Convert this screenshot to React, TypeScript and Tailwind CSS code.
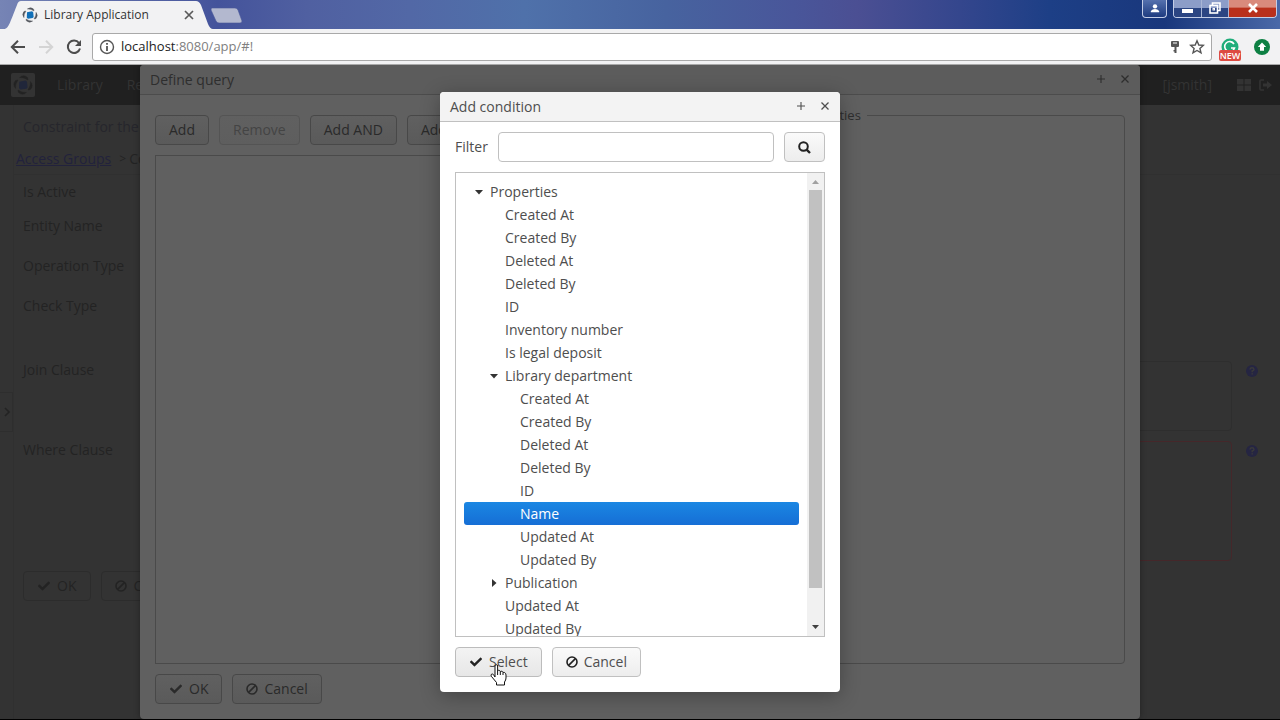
import type { ReactNode } from "react";
import { FaCheck } from "react-icons/fa";

const RING = [0, 90, 180, 270];

function CubaLogo({ className, ring, core }: { className: string; ring: string; core: string }) {
  return (
    <svg viewBox="0 0 24 24" className={className} aria-hidden="true">
      {RING.map((angle) => (
        <path
          key={angle}
          d="M8 3 Q13 -1 17.5 3.2 L18 6 Q13 2.4 8 3 Z"
          fill={ring}
          stroke={ring}
          strokeWidth="0.6"
          transform={`rotate(${angle} 12 12)`}
        />
      ))}
      <path d="M7.5 8 L15 6.5 L16.8 8 L17.5 15 L16 16.5 L9 17.5 L7.2 16 Z" fill={core} />
    </svg>
  );
}

function BanIcon({ className }: { className: string }) {
  return (
    <svg viewBox="0 0 12 12" className={className} fill="none" stroke="currentColor" strokeWidth="1.6" aria-hidden="true">
      <circle cx="6" cy="6" r="5" />
      <path d="M2.6 9.4 L9.4 2.6" />
    </svg>
  );
}

function SearchIcon() {
  return (
    <svg viewBox="0 0 13 13" className="h-[13px] w-[13px]" fill="none" stroke="currentColor" strokeWidth="2" aria-hidden="true">
      <circle cx="5.5" cy="5.5" r="4.3" />
      <path d="M8.6 8.6 L12 12" strokeWidth="2.4" />
    </svg>
  );
}

function TitleBar() {
  return (
    <header className="flex h-[29px] items-start justify-between bg-[linear-gradient(90deg,#7684b5_0%,#44539b_17%,#5060a1_24%,#5268a6_32%,#4f71aa_41%,#47639f_52%,#49569a_62%,#4b4f93_67%,#34468d_75%,#1d3f86_82%,#19377c_91%,#4a69a8_100%)]">
      <div className="relative flex h-[29px] w-[244px] items-center">
        <svg viewBox="0 0 244 29" className="absolute left-0 top-0 h-[29px] w-[244px]" aria-hidden="true">
          <path d="M5 29 C9 27 9 25 17 5 Q18 1 21 1 H196 Q199 1 201 5 L208 24 Q210 29 213 29 Z" fill="#f2f2f3" />
          <path d="M212 8 H235 Q237 8 238 10 L242 21 Q242 23 240 23 H219 Q217 23 216 21 L211 10 Q211 8 212 8 Z" fill="#b3b8cf" stroke="#4a5898" strokeWidth="0.6" />
        </svg>
        <div className="relative flex w-full items-center pl-[22px] pr-[47px]">
          <CubaLogo className="h-4 w-4" ring="#55595f" core="#1170b8" />
          <span className="ml-1.5 flex-1 whitespace-nowrap text-xs text-[#333]">Library Application</span>
          <button aria-label="Close tab" className="flex h-4 w-4 items-center justify-center">
            <svg viewBox="0 0 10 10" className="h-2.5 w-2.5" stroke="#5a5a5a" strokeWidth="1.7">
              <path d="M1 1 L9 9 M9 1 L1 9" />
            </svg>
          </button>
        </div>
      </div>

      <div className="flex pr-[3px]">
        <button aria-label="Profile" className="mr-1.5 flex h-[18px] w-[25px] items-center justify-center rounded-b border border-t-0 border-[#c3cde6] bg-linear-to-b from-[#5571ae] to-[#1e3b80]">
          <svg viewBox="0 0 12 12" className="mb-0.5 h-2.5 w-2.5" fill="#fff">
            <circle cx="6" cy="4" r="2.6" />
            <path d="M1 11 V9.5 Q3 7.2 6 7.2 T11 9.5 V11 Z" />
          </svg>
        </button>
        <div className="flex h-[18px] overflow-hidden rounded-b border border-t-0 border-[#c3cde6]">
          <button aria-label="Minimize" className="flex w-[28px] items-center justify-center border-r border-[#a9b6d6] bg-linear-to-b from-[#8c9dc8] from-45% to-[#2b4583] to-50%">
            <span className="mt-1 h-1 w-[11px] bg-white" />
          </button>
          <button aria-label="Restore" className="flex w-[27px] items-center justify-center border-r border-[#a9b6d6] bg-linear-to-b from-[#8c9dc8] from-45% to-[#2b4583] to-50%">
            <svg viewBox="0 0 12 12" className="mb-0.5 h-3 w-3" fill="none" stroke="#fff" strokeWidth="1.6">
              <path d="M3.5 3 V1 H11 V8.5 H9" />
              <rect x="1" y="3.5" width="7.5" height="7.5" />
              <rect x="4" y="6.5" width="1.5" height="1.5" strokeWidth="1" />
            </svg>
          </button>
          <button aria-label="Close" className="flex w-[47px] items-center justify-center bg-linear-to-b from-[#d98a7c] from-40% to-[#b9301c] to-50%">
            <svg viewBox="0 0 12 10" className="mb-0.5 h-2.5 w-3" stroke="#fff" strokeWidth="2.6">
              <path d="M2 1 L10 9 M10 1 L2 9" />
            </svg>
          </button>
        </div>
      </div>
    </header>
  );
}

function Toolbar() {
  return (
    <div className="flex h-9 items-center border-b border-[#a9a9a9] bg-[#f2f2f3] pl-2.5 pr-[9px]">
      <div className="flex items-center gap-3">
        <button aria-label="Back">
          <svg viewBox="0 0 16 16" className="h-4 w-4" fill="none" stroke="#4c4c4c" strokeWidth="2">
            <path d="M15 8 H2.5 M8 1.8 L1.8 8 L8 14.2" />
          </svg>
        </button>
        <button aria-label="Forward" disabled>
          <svg viewBox="0 0 16 16" className="h-4 w-4" fill="none" stroke="#d4d4d4" strokeWidth="2">
            <path d="M1 8 H13.5 M8 1.8 L14.2 8 L8 14.2" />
          </svg>
        </button>
        <button aria-label="Reload">
          <svg viewBox="0 0 16 16" className="h-4 w-4" fill="none" stroke="#4c4c4c" strokeWidth="2">
            <path d="M13 4 A6.2 6.2 0 1 0 14 9.5" />
            <path d="M15 1 V7 H9 Z" fill="#4c4c4c" stroke="none" />
          </svg>
        </button>
      </div>
      <div className="ml-2.5 flex h-7 flex-1 items-center rounded-[3px] border border-[#a9a9a9] bg-white px-1.5">
        <svg viewBox="0 0 16 16" className="h-4 w-4" fill="none" stroke="#555" strokeWidth="1.4">
          <circle cx="8" cy="8" r="6.5" />
          <path d="M8 7 V12 M8 4 V5.7" strokeWidth="1.8" />
        </svg>
        <div className="ml-1.5 flex-1 text-[13px] text-[#808080]">
          <span className="text-[#222]">localhost</span>:8080/app/#!
        </div>
        <svg viewBox="0 0 12 14" className="mr-2 h-3.5 w-3" fill="#555" aria-hidden="true">
          <path d="M3 1 H9 Q10 1 10 2 V6 Q10 7 9 7 H7.5 V13 H5.5 V11.5 H4.5 V10 H5.5 V7 H3 Q2 7 2 6 V2 Q2 1 3 1 Z M4 2.4 V3.6 H8 V2.4 Z" fillRule="evenodd" />
        </svg>
        <svg viewBox="0 0 16 16" className="h-4 w-4" fill="none" stroke="#555" strokeWidth="1.4" aria-hidden="true">
          <path d="M8 1.8 L9.8 6 L14.3 6.4 L10.9 9.4 L12 13.9 L8 11.5 L4 13.9 L5.1 9.4 L1.7 6.4 L6.2 6 Z" />
        </svg>
      </div>
      <button aria-label="Grammar extension" className="relative ml-[7px] flex h-7 w-[22px] flex-col items-center pt-[5px]">
        <svg viewBox="0 0 18 18" className="h-[18px] w-[18px]">
          <circle cx="9" cy="9" r="8.5" fill="#1fad7a" />
          <path d="M13 6 A5 5 0 1 0 13.5 10 H10" fill="none" stroke="#fff" strokeWidth="1.6" />
        </svg>
        <span className="absolute bottom-0 rounded-xs bg-[#dd4b41] px-px text-[9px] font-semibold leading-[11px] text-white">NEW</span>
      </button>
      <button aria-label="Update available" className="ml-3">
        <svg viewBox="0 0 18 18" className="h-[18px] w-[18px]">
          <circle cx="9" cy="9" r="8" fill="#0e8043" />
          <path d="M9 4.5 L13.2 9 H11 V12.8 H7 V9 H4.8 Z" fill="#fff" />
        </svg>
      </button>
    </div>
  );
}

function HelpIcon() {
  return (
    <svg viewBox="0 0 12 12" className="mt-[5px] h-3 w-3" aria-label="Help">
      <circle cx="6" cy="6" r="6" fill="#252542" />
      <path d="M4 4.5 Q4.2 2.8 6 2.8 T8 4.5 Q8 5.4 6.2 6 V7.2 M6.2 8.2 V9.6" fill="none" stroke="#3a3a3a" strokeWidth="1.5" />
    </svg>
  );
}

const SHORT_ROWS = [
  { label: "Is Active", height: "h-[34px]" },
  { label: "Entity Name", height: "h-10" },
  { label: "Operation Type", height: "h-10" },
  { label: "Check Type", height: "h-16" },
];

/* Constraint editor, dimmed behind the dialogs */
function ConstraintScreen() {
  return (
    <div className="flex min-h-[654px] flex-1 flex-col bg-[#333] text-sm text-[#232323]">
      <nav className="flex h-10 items-center bg-[#202020] pl-[11px] pr-[7px] text-[#333]">
        <div className="flex h-6 w-6 items-center justify-center rounded-xs bg-[#333]">
          <CubaLogo className="h-5 w-5" ring="#232323" core="#20263a" />
        </div>
        <a href="#library" className="ml-[22px]">Library</a>
        <a href="#reports" className="ml-6 flex-1">Re</a>
        <span className="mr-[25px]">[jsmith]</span>
        <svg viewBox="0 0 14 12" className="h-3 w-3.5" fill="#333" aria-hidden="true">
          <path d="M0 0 H6.5 V5.5 H0 Z M7.5 0 H14 V5.5 H7.5 Z M0 6.5 H6.5 V12 H0 Z M7.5 6.5 H14 V12 H7.5 Z" />
        </svg>
        <svg viewBox="0 0 14 12" className="ml-2 h-3 w-3.5" fill="none" stroke="#333" strokeWidth="1.6" aria-hidden="true">
          <path d="M5 1 H2 Q1 1 1 2 V10 Q1 11 2 11 H5" />
          <path d="M4 4.5 H8 V2 L13 6 L8 10 V7.5 H4 Z" fill="#333" stroke="none" />
        </svg>
      </nav>

      <div className="flex flex-1">
        <div className="flex w-3.5 flex-col border-r border-[#303030] pt-[287px]">
          <button aria-label="Expand side panel" className="flex h-10 items-center justify-center border border-l-0 border-[#2e2e2e] pl-0.5">
            <svg viewBox="0 0 8 10" className="h-2.5 w-2" fill="none" stroke="#232323" strokeWidth="1.6">
              <path d="M2 1 L6 5 L2 9" />
            </svg>
          </button>
        </div>
        <div className="flex flex-1 flex-col">
          <div className="flex h-9 items-end pb-1 pl-[9px] text-[#26262c]">Constraint for the</div>
          <div className="flex h-[34px] items-center border-b border-[#303030] pl-0.5 pt-0.5">
            <a href="#groups" className="text-[#22223c] underline">Access Groups</a>
            <span className="ml-2 text-xs">&gt;</span>
            <span className="ml-[3px]">Co</span>
          </div>
          <div className="flex flex-col pl-[9px] pt-[7px]">
            {SHORT_ROWS.map((row) => (
              <div key={row.label} className={row.height}>{row.label}</div>
            ))}
            <div className="flex h-20">
              <label htmlFor="join" className="w-40">Join Clause</label>
              <textarea id="join" className="mt-px h-[70px] flex-1 resize-none rounded border border-[#2e2e2e]" />
              <div className="ml-3.5 w-[34px]"><HelpIcon /></div>
            </div>
            <div className="flex h-[131px]">
              <label htmlFor="where" className="w-40">Where Clause</label>
              <textarea id="where" className="mt-px h-[120px] flex-1 resize-none rounded border border-[#45272a]" />
              <div className="ml-3.5 w-[34px]"><HelpIcon /></div>
            </div>
            <div className="flex gap-2.5">
              <button className="flex h-[30px] items-center gap-[7px] rounded border border-[#2c2c2c] px-3.5">
                <FaCheck className="h-3 w-3" />OK
              </button>
              <button className="flex h-[30px] items-center gap-1.5 rounded border border-[#2c2c2c] px-[13px]">
                <BanIcon className="h-3 w-3" />Cancel
              </button>
            </div>
          </div>
        </div>
      </div>
    </div>
  );
}

function WindowTools() {
  return (
    <div className="flex items-center gap-4 pb-0.5">
      <button aria-label="Maximize">
        <svg viewBox="0 0 8 8" className="h-2 w-2" stroke="currentColor" strokeWidth="1.1">
          <path d="M4 0 V8 M0 4 H8" />
        </svg>
      </button>
      <button aria-label="Close dialog">
        <svg viewBox="0 0 8 8" className="h-2 w-2" stroke="currentColor" strokeWidth="1.3">
          <path d="M0.5 0.5 L7.5 7.5 M7.5 0.5 L0.5 7.5" />
        </svg>
      </button>
    </div>
  );
}

function DimButton({ children, disabled }: { children: ReactNode; disabled?: boolean }) {
  return (
    <button
      disabled={disabled}
      className="flex h-[30px] items-center gap-1.5 whitespace-nowrap rounded border border-[#484848] bg-linear-to-b from-[#606060] to-[#5a5a5a] px-[13px] text-[#2a2a2a] disabled:border-[#545454] disabled:from-[#606060] disabled:to-[#5e5e5e] disabled:text-[#444]"
    >
      {children}
    </button>
  );
}

function DefineQueryDialog() {
  return (
    <section aria-label="Define query" className="flex h-full w-[1000px] flex-col rounded bg-[#606060] text-sm text-[#2e2e2e] shadow-[0_0_6px_rgba(0,0,0,0.35)]">
      <div className="flex h-[30px] items-center justify-between rounded-t border-b border-[#4c4c4c] bg-[#5c5c5c] pl-2.5 pr-[11px]">
        <h2>Define query</h2>
        <WindowTools />
      </div>
      <div className="flex flex-1 flex-col gap-2.5 px-[15px] pb-[15px] pt-2.5">
        <div className="flex flex-1 gap-2.5">
          <div className="flex flex-1 flex-col gap-2.5 pt-2.5">
            <div className="flex gap-2.5">
              <DimButton>Add</DimButton>
              <DimButton disabled>Remove</DimButton>
              <DimButton>Add AND</DimButton>
              <DimButton>Add OR</DimButton>
            </div>
            <div className="flex-1 border border-[#4a4a4a]" />
          </div>
          <fieldset className="flex-1 rounded border border-[#4a4a4a] pl-[169px]">
            <legend className="px-1.5 text-[13px] leading-5">Condition properties</legend>
          </fieldset>
        </div>
        <div className="flex gap-2.5">
          <DimButton>
            <FaCheck className="mx-px h-3 w-3" />OK
          </DimButton>
          <DimButton>
            <BanIcon className="h-3 w-3" />Cancel
          </DimButton>
        </div>
      </div>
    </section>
  );
}

type Node = { label: string; depth: number; state?: "open" | "closed"; selected?: boolean };

const NODES: Node[] = [
  { label: "Properties", depth: 0, state: "open" },
  { label: "Created At", depth: 1 },
  { label: "Created By", depth: 1 },
  { label: "Deleted At", depth: 1 },
  { label: "Deleted By", depth: 1 },
  { label: "ID", depth: 1 },
  { label: "Inventory number", depth: 1 },
  { label: "Is legal deposit", depth: 1 },
  { label: "Library department", depth: 1, state: "open" },
  { label: "Created At", depth: 2 },
  { label: "Created By", depth: 2 },
  { label: "Deleted At", depth: 2 },
  { label: "Deleted By", depth: 2 },
  { label: "ID", depth: 2 },
  { label: "Name", depth: 2, selected: true },
  { label: "Updated At", depth: 2 },
  { label: "Updated By", depth: 2 },
  { label: "Publication", depth: 1, state: "closed" },
  { label: "Updated At", depth: 1 },
  { label: "Updated By", depth: 1 },
];

const INDENT = ["pl-2.5", "pl-[25px]", "pl-10"];

function PropertyTree() {
  return (
    <div className="flex h-[465px] overflow-hidden border border-[#c0c0c0]">
      <ul role="tree" className="flex-1 px-2 pt-[7px]">
        {NODES.map((node, i) => (
          <li
            key={i}
            role="treeitem"
            aria-selected={!!node.selected}
            className={`flex h-[23px] items-center rounded-[3px] ${INDENT[node.depth]} ${
              node.selected ? "bg-linear-to-b from-[#1b87e3] to-[#166ed5] text-white" : ""
            }`}
          >
            <span className="flex w-4 items-center">
              {node.state && (
                <svg viewBox="0 0 10 10" className="h-2.5 w-2.5" fill="#333">
                  {node.state === "open" ? <path d="M1 3 H9 L5 7.5 Z" /> : <path d="M3 1 V9 L7.5 5 Z" />}
                </svg>
              )}
            </span>
            {node.label}
          </li>
        ))}
      </ul>
      <div className="flex w-[17px] flex-col items-center bg-[#f1f1f1]" aria-hidden="true">
        <svg viewBox="0 0 17 17" className="h-[17px] w-[17px]" fill="#a0a0a0"><path d="M5 11 L8.5 7 L12 11 Z" /></svg>
        <div className="h-[398px] w-[13px] bg-[#c1c1c1]" />
        <div className="flex-1" />
        <svg viewBox="0 0 17 17" className="h-[17px] w-[17px]" fill="#404040"><path d="M5 6 L8.5 10 L12 6 Z" /></svg>
      </div>
    </div>
  );
}

function AddConditionDialog() {
  return (
    <section aria-label="Add condition" className="flex w-[400px] flex-col rounded bg-white text-sm text-[#4e4e4e] shadow-[0_4px_20px_rgba(0,0,0,0.3)]">
      <div className="flex h-[30px] items-center justify-between rounded-t border-b border-[#c0c0c0] bg-[#f3f3f3] pl-2.5 pr-[11px]">
        <h2>Add condition</h2>
        <WindowTools />
      </div>
      <div className="flex flex-col gap-2.5 px-[15px] pb-[15px] pt-2.5">
        <div className="flex items-center gap-2.5">
          <label htmlFor="filter">Filter</label>
          <input id="filter" type="text" className="h-[30px] min-w-0 flex-1 rounded border border-[#c0c0c0] px-2 outline-none" />
          <button aria-label="Search" className="flex h-[30px] w-[41px] items-center justify-center rounded border border-[#c0c0c0] bg-linear-to-b from-[#fafafa] to-[#ededed] text-[#222]">
            <SearchIcon />
          </button>
        </div>
        <PropertyTree />
        <div className="flex gap-2.5">
          <button className="relative flex h-[30px] items-center gap-[7px] rounded border border-[#bcbcbc] bg-linear-to-b from-[#f3f3f3] to-[#e7e7e7] pl-3.5 pr-[13px]">
            <FaCheck className="h-3 w-3 text-[#222]" />
            Select
            <PointerHand />
          </button>
          <button className="flex h-[30px] items-center gap-1.5 rounded border border-[#c0c0c0] bg-linear-to-b from-[#fafafa] to-[#ededed] px-[13px]">
            <BanIcon className="h-3 w-3 text-[#222]" />
            Cancel
          </button>
        </div>
      </div>
    </section>
  );
}

function PointerHand() {
  return (
    <svg viewBox="0 0 17 22" className="absolute left-[34px] top-4 h-[22px] w-[17px]" aria-hidden="true">
      <path
        d="M5 13 V2 Q5 0.7 6.3 0.7 T7.6 2 V7 Q8.2 6 9.3 6.4 T10.3 7.8 Q11 6.9 12 7.3 T13 8.7 Q13.8 8 14.7 8.6 Q16 9.3 16 11 V14 Q16 16 14.5 18 V21 H6.5 V18.5 L1.5 12.5 Q0.5 11 1.5 10.2 Q2.6 9.6 3.7 10.8 Z"
        fill="#fff"
        stroke="#111"
      />
      <path d="M7.6 7 V11 M10.3 8 V11 M13 9 V11" stroke="#111" />
    </svg>
  );
}

export default function App() {
  return (
    <div className="flex min-h-screen flex-col bg-black font-['Open_Sans','Noto_Sans',sans-serif]">
      <TitleBar />
      <Toolbar />
      <main className="relative flex flex-1 flex-col overflow-hidden pb-px">
        <ConstraintScreen />
        <div className="absolute inset-0 flex justify-center pb-px">
          <DefineQueryDialog />
        </div>
        <div className="absolute inset-0 flex items-center justify-center pb-px">
          <AddConditionDialog />
        </div>
      </main>
    </div>
  );
}
